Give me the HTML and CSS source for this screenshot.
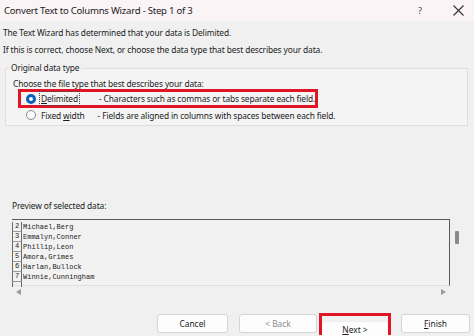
FILE: index.html
```html
<!DOCTYPE html>
<html>
<head>
<meta charset="utf-8">
<link rel="stylesheet" href="styles.css">
</head>
<body>
<div class="dialog">
  <div class="titlebar">
    <span class="title">Convert Text to Columns Wizard - Step 1 of 3</span>
    <span class="tb-help">?</span>
    <svg class="tb-close" width="11" height="11" viewBox="0 0 11 11"><path d="M0.5 0.5 L10.5 10.5 M10.5 0.5 L0.5 10.5" stroke="#333" stroke-width="1.1" fill="none"/></svg>
  </div>
  <div class="content">
    <p class="line l1">The Text Wizard has determined that your data is Delimited.</p>
    <p class="line l2">If this is correct, choose Next, or choose the data type that best describes your data.</p>
    <fieldset class="group">
      <legend>Original data type</legend>
      <div class="choose">Choose the file type that best describes your data:</div>
      <div class="opt selected">
        <span class="radio on"></span>
        <span class="lbl focus"><u>D</u>elimited</span>
        <span class="desc d1">- Characters such as commas or tabs separate each field.</span>
      </div>
      <div class="opt plain">
        <span class="radio"></span>
        <span class="lbl">Fixed <u>w</u>idth</span>
        <span class="desc d2">- Fields are aligned in columns with spaces between each field.</span>
      </div>
    </fieldset>
    <div class="preview-label">Preview of selected data:</div>
    <div class="preview">
      <div class="pv-main">
        <div class="pv-box">
          <div class="row"><span class="num">2</span><span class="data">Michael,Berg</span></div>
          <div class="row"><span class="num">3</span><span class="data">Emmalyn,Conner</span></div>
          <div class="row"><span class="num">4</span><span class="data">Phillip,Leon</span></div>
          <div class="row"><span class="num">5</span><span class="data">Amora,Grimes</span></div>
          <div class="row"><span class="num">6</span><span class="data">Harlan,Bullock</span></div>
          <div class="row"><span class="num">7</span><span class="data">Winnie,Cunningham</span></div>
          <div class="row tail"><span class="num"></span><span class="data"></span></div>
        </div>
        <div class="vscroll"><span class="thumb"></span></div>
      </div>
      <div class="hscroll">
        <svg width="5" height="6" viewBox="0 0 5 6"><path d="M5 0 L0 3 L5 6 Z" fill="#9a9a9a"/></svg>
        <svg width="5" height="6" viewBox="0 0 5 6"><path d="M0 0 L5 3 L0 6 Z" fill="#9a9a9a"/></svg>
      </div>
    </div>
    <div class="buttons">
      <button class="btn b-cancel">Cancel</button>
      <button class="btn b-back" disabled>&lt; Back</button>
      <div class="hl"><button class="btn b-next"><u>N</u>ext &gt;</button></div>
      <button class="btn b-finish"><u>F</u>inish</button>
    </div>
  </div>
</div>
</body>
</html>
```
FILE: styles.css
```css
* { box-sizing: border-box; }
html, body { margin: 0; padding: 0; }
body {
  width: 474px;
  height: 336px;
  overflow: hidden;
  background: #f0f0f0;
  font-family: "Noto Sans", "Open Sans", sans-serif;
  color: #1b1b1b;
}
.dialog { width: 474px; height: 336px; }
.titlebar {
  height: 21px;
  background: #fbf4f7;
  display: flex;
  align-items: center;
  padding-left: 4px;
}
.title { font-size: 9.6px; letter-spacing: -0.25px; color: #222; flex: 1; }
.tb-help { font-size: 9px; color: #444; margin-right: 31px; }
.tb-close { margin-right: 10px; }

.line { margin: 0; font-size: 8.4px; letter-spacing: -0.12px; line-height: 17px; padding-left: 3px; white-space: nowrap; }
.l1 { margin-top: 3px; }

.group {
  margin: 4px 0 0 5px;
  width: 463px;
  padding: 0 0 3px 0;
  border: 1px solid #dedede;
  background: #f4f4f4;
}
.group legend {
  font-size: 8.4px;
  letter-spacing: -0.12px;
  line-height: 12px;
  padding: 0 2px;
  margin-left: 3px;
}
.choose { font-size: 8.4px; letter-spacing: -0.12px; line-height: 10px; margin: 5px 0 0 7px; }
.opt {
  display: flex;
  align-items: center;
  width: 300px;
  font-size: 8.4px;
  letter-spacing: -0.12px;
}
.opt.selected {
  height: 19px;
  margin-left: 12px;
  border: 3px solid #e11525;
  padding-left: 5px;
}
.opt.plain {
  height: 14px;
  margin-left: 15px;
  padding-left: 5px;
}
.radio {
  width: 10px; height: 10px;
  border-radius: 50%;
  border: 1px solid #8a8a8a;
  background: #fafafa;
  flex: none;
}
.radio.on {
  border: 3px solid #0a5fb8;
  background: #fff;
}
.lbl { margin-left: 5px; white-space: nowrap; }
.focus { outline: 1px dotted #444; outline-offset: 1px; }
.desc { white-space: nowrap; }
.d1 { margin-left: 21px; }
.d2 { margin-left: 13px; }

.preview-label { font-size: 8.4px; letter-spacing: -0.12px; line-height: 12px; margin: 74px 0 0 12px; }
.preview { margin: 7px 0 0 12px; width: 450px; }
.pv-main { display: flex; }
.pv-box {
  width: 438px;
  height: 67px;
  border-top: 1px solid #5a5a5a;
  border-right: 1px solid #5a5a5a;
  border-bottom: 1px solid #e2e2e2;
  background: #f2f2f2;
  padding-top: 2px;
}
.row { display: flex; height: 10px; font-family: "Liberation Mono", monospace; font-size: 7px; line-height: 10px; color: #222; }
.num {
  width: 10px;
  border-left: 1px solid #6a6a6a;
  border-right: 1px solid #6a6a6a;
  border-bottom: 1px solid #9a9a9a;
  text-align: center;
  line-height: 9px;
}
.row.tail { height: 5px; }
.row.tail .num { border-bottom: none; }
.data { padding-left: 1px; white-space: nowrap; }
.vscroll { width: 12px; }
.thumb { display: block; width: 4px; height: 13px; background: #8a8a8a; margin: 12px 0 0 5px; border-radius: 1px; }
.hscroll { display: flex; justify-content: space-between; align-items: center; height: 12px; width: 434px; padding: 0 0 0 4px; }

.buttons {
  display: flex;
  align-items: flex-start;
  margin-top: 15px;
  padding-left: 157px;
}
.btn {
  height: 19px;
  background: #fdfdfd;
  border: 1px solid #d4d4d4;
  border-radius: 3px;
  font-family: "Noto Sans", "Open Sans", sans-serif;
  font-size: 8.4px;
  color: #1b1b1b;
  padding: 0;
  margin-top: 1px;
}
.b-cancel { width: 71px; }
.b-back { width: 78px; margin-left: 11px; color: #8c8c8c; }
.hl { margin-left: 2px; border: 3px solid #e11525; width: 72px; height: 22px; }
.b-next { width: 66px; height: 16px; margin: 0; border-color: #fdfdfd; }
.b-finish { width: 69px; margin-left: 10px; }
```
